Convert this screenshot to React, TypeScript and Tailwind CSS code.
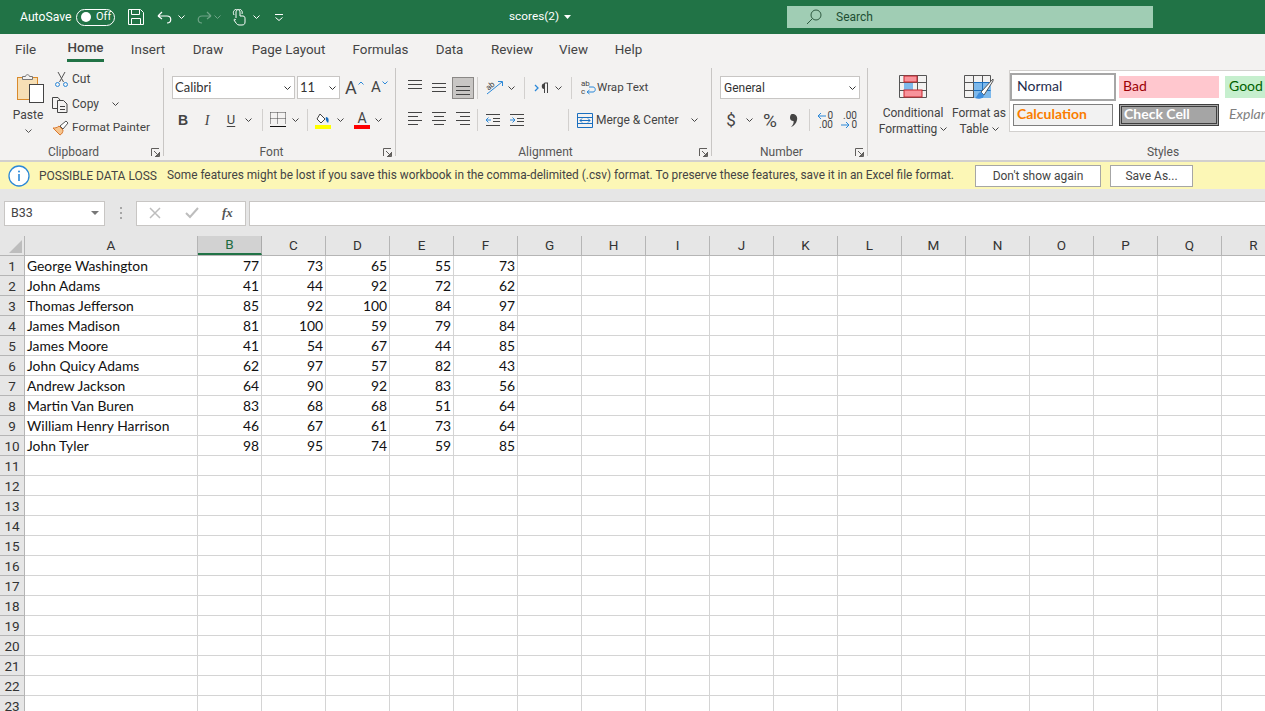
import type { ReactNode } from "react";

const tabs = [
  { label: "File", cls: "w-[51px]" },
  { label: "Home", cls: "w-[69px]" },
  { label: "Insert", cls: "w-[56px]" },
  { label: "Draw", cls: "w-[64px]" },
  { label: "Page Layout", cls: "w-[97px]" },
  { label: "Formulas", cls: "w-[87px]" },
  { label: "Data", cls: "w-[51px]" },
  { label: "Review", cls: "w-[74px]" },
  { label: "View", cls: "w-[49px]" },
  { label: "Help", cls: "w-[61px]" },
];

const columns = ["B", "C", "D", "E", "F", "G", "H", "I", "J", "K", "L", "M", "N", "O", "P", "Q", "R"];

const people: [string, number, number, number, number, number][] = [
  ["George Washington", 77, 73, 65, 55, 73],
  ["John Adams", 41, 44, 92, 72, 62],
  ["Thomas Jefferson", 85, 92, 100, 84, 97],
  ["James Madison", 81, 100, 59, 79, 84],
  ["James Moore", 41, 54, 67, 44, 85],
  ["John Quicy Adams", 62, 97, 57, 82, 43],
  ["Andrew Jackson", 64, 90, 92, 83, 56],
  ["Martin Van Buren", 83, 68, 68, 51, 64],
  ["William Henry Harrison", 46, 67, 61, 73, 64],
  ["John Tyler", 98, 95, 74, 59, 85],
];

function Chevron({ className = "text-[#605e5c]" }: { className?: string }) {
  return (
    <svg width="7" height="4" viewBox="0 0 7 4" fill="none" stroke="currentColor" className={`shrink-0 ${className}`}>
      <path d="M.5.5l3 3 3-3" />
    </svg>
  );
}

function Launcher() {
  return (
    <div className="w-4 flex justify-end pr-[3px]">
      <svg width="9" height="9" viewBox="0 0 9 9" fill="none" stroke="#605e5c">
        <path d="M.5 8V.5H8M8.5 4v4.5H4M3 3l4.5 4.5M5 7.5h2.5V5" />
      </svg>
    </div>
  );
}

function Group({ label, className, children }: { label: string; className: string; children: ReactNode }) {
  return (
    <div className={`flex flex-col h-[95px] shrink-0 ${className}`}>
      <div className="flex-1 min-h-0">{children}</div>
      <div className="h-[16px] flex items-center text-[12px] text-[#555]">
        <div className="flex-1 text-center">{label}</div>
        <Launcher />
      </div>
    </div>
  );
}

function RibbonDivider() {
  return <div className="w-px h-[88px] mt-[3px] bg-[#c8c6c4] shrink-0" />;
}

function Lines({ ys, xs }: { ys: number[]; xs?: [number, number][] }) {
  return (
    <svg width="16" height="16" viewBox="0 0 16 16" stroke="#444" fill="none">
      {ys.map((y, i) => (
        <path key={i} d={`M${xs ? xs[i][0] : 1} ${y}.5H${xs ? xs[i][1] : 15}`} />
      ))}
    </svg>
  );
}

function VSep({ className }: { className: string }) {
  return <div className={`w-px h-[22px] bg-[#d2d0ce] shrink-0 ${className}`} />;
}

function Combo({ className, text }: { className: string; text: string }) {
  return (
    <div className={`h-[23px] bg-white border border-[#c8c6c4] flex items-center justify-between pr-[3px] text-[#333] ${className}`}>
      <span>{text}</span>
      <Chevron className="text-[#333]" />
    </div>
  );
}

function ClipboardGroup() {
  return (
    <Group label="Clipboard" className="w-[163px]">
      <div className="flex text-[12px] text-[#444] h-full">
        <div className="w-[52px] pl-[4px] pt-[7px] flex flex-col items-center">
          <svg width="28" height="32" viewBox="0 0 28 32" className="ml-[4px]">
            <rect x="1.5" y="5.5" width="20" height="22" fill="#f6dfb5" stroke="#d98a2c" />
            <path d="M6.5 7.5V4.5H9.5C10 2 13 2 13.5 4.5H16.5V7.5Z" fill="#f3f2f1" stroke="#777" />
            <rect x="13.5" y="12.5" width="14" height="18" fill="#fff" stroke="#444" />
          </svg>
          <div className="mt-[2px] leading-[18px]">Paste</div>
          <Chevron className="mt-[5px] text-[#555]" />
        </div>
        <div className="flex flex-col">
          <div className="h-[22px] mt-[3px] flex items-center">
            <svg width="15" height="17" viewBox="0 0 15 17" fill="none" className="ml-[2px] mr-[3px]">
              <path d="M4 1l5.5 10M11 1L5.500 11" stroke="#555" />
              <circle cx="3.5" cy="13.5" r="2" stroke="#2b88d8" />
              <circle cx="11.5" cy="13.5" r="2" stroke="#2b88d8" />
            </svg>
            <span>Cut</span>
          </div>
          <div className="h-[24px] mt-[2px] flex items-center">
            <svg width="17" height="17" viewBox="0 0 17 17" fill="none" stroke="#444" className="mr-[3px]">
              <path d="M6 12.5H.5V1.5H6L8 4M5.5 4.5h6l3.5 3.5v8.5H5.5z" />
              <path d="M8 10.5h5M8 13.5h5" />
            </svg>
            <span>Copy</span>
            <Chevron className="ml-[13px] text-[#444]" />
          </div>
          <div className="h-[22px] mt-[1px] flex items-center">
            <svg width="17" height="16" viewBox="0 0 17 16" fill="none" className="mr-[3px]">
              <path d="M2 9l6 6c2-1 3-3 3-5L7 6C5 8 3 8 1 8z" fill="#f6c58f" stroke="#d9772c" />
              <path d="M8 6l6-5 2 2-5 6z" fill="#fff" stroke="#555" />
            </svg>
            <span className="text-[11.8px]">Format Painter</span>
          </div>
        </div>
      </div>
    </Group>
  );
}

function FontGroup() {
  return (
    <Group label="Font" className="w-[231px]">
      <div className="pl-[8px] pt-[11px] text-[#444]">
        <div className="flex items-center h-[23px]">
          <Combo className="w-[123px] pl-[2px] text-[13px] [font-family:'Lato',sans-serif]" text="Calibri" />
          <Combo className="w-[43px] ml-[2px] pl-[2px] text-[13px] [font-family:'Lato',sans-serif]" text="11" />
          <div className="w-[17px] ml-[5px] text-[18px] leading-none relative">
            A
            <svg width="6" height="4" viewBox="0 0 6 4" fill="none" stroke="#2b88d8" className="absolute right-[-2px] top-[2px]">
              <path d="M.5 3.5L3 1l2.5 2.5" />
            </svg>
          </div>
          <div className="w-[14px] ml-[9px] text-[15px] leading-none relative">
            A
            <svg width="6" height="4" viewBox="0 0 6 4" fill="none" stroke="#2b88d8" className="absolute right-[-3px] top-[1px]">
              <path d="M.5.5L3 3l2.5-2.5" />
            </svg>
          </div>
        </div>
        <div className="flex items-center h-[24px] mt-[9px]">
          <div className="w-[24px] ml-[-1px] text-center text-[14px] font-bold text-[#444] [font-family:'Liberation_Sans',sans-serif]">B</div>
          <div className="w-[24px] text-center text-[14px] italic text-[#444] [font-family:'Liberation_Serif',serif]">I</div>
          <div className="w-[24px] text-center text-[13px] underline underline-offset-2 text-[#444]">U</div>
          <Chevron className="ml-[2px] text-[#444]" />
          <VSep className="ml-[10px]" />
          <svg width="16" height="16" viewBox="0 0 16 16" fill="none" className="ml-[7px]">
            <path d="M.5.5h15M.5 6.5h15M.5 .5v12M7.5.5v12M15.5.5v12" stroke="#444" strokeDasharray="1 1" />
            <path d="M0 14.5h16" stroke="#111" />
          </svg>
          <Chevron className="ml-[6px] text-[#444]" />
          <VSep className="ml-[8px]" />
          <svg width="16" height="17" viewBox="0 0 16 17" fill="none" className="ml-[7px]">
            <path d="M5 2l5 5-4 4-4-4z" fill="#fff" stroke="#444" />
            <path d="M11 5c3 0 3 4 2 6-1-1-3-3-2-6z" fill="#1a6fbf" />
            <rect y="13" width="16" height="4" fill="#ffff00" />
          </svg>
          <Chevron className="ml-[6px] text-[#444]" />
          <div className="w-[16px] ml-[10px] flex flex-col items-center text-[14px] leading-[14px] text-[#444]">
            A<div className="w-[16px] h-[4px] bg-[#ff0000]" />
          </div>
          <Chevron className="ml-[5px] text-[#444]" />
        </div>
      </div>
    </Group>
  );
}

function AlignmentGroup() {
  return (
    <Group label="Alignment" className="w-[315px]">
      <div className="pl-[11px] pt-[11px] text-[12px] text-[#444]">
        <div className="flex items-center h-[23px]">
          <div className="w-[24px]"><Lines ys={[0, 4, 8]} /></div>
          <div className="w-[24px]"><Lines ys={[3, 7, 11]} /></div>
          <div className="w-[22px] h-[22px] -ml-[3px] bg-[#c8c6c4] border border-[#8a8886] flex items-center justify-center"><Lines ys={[6, 10, 14]} /></div>
          <VSep className="ml-[3px]" />
          <svg width="20" height="17" viewBox="0 0 20 17" fill="none" className="ml-[7px]">
            <path d="M2 15L17 3M13 2.5h4.5V7" stroke="#2b88d8" />
            <text x="1" y="9" fontSize="8" fill="#444" transform="rotate(-40 6 7)" fontFamily="Roboto">ab</text>
          </svg>
          <Chevron className="ml-[3px] text-[#444]" />
          <VSep className="ml-[9px]" />
          <svg width="16" height="14" viewBox="0 0 16 14" fill="none" className="ml-[9px]">
            <path d="M1 4l3 3-3 3" stroke="#2b88d8" strokeWidth="1.3" />
            <path d="M10.5 2H14M10.5 2v10M13.5 2v10" stroke="#444" />
            <path d="M10 2.5C7 2.5 7 8 10 8z" fill="#444" />
          </svg>
          <Chevron className="ml-[5px] text-[#444]" />
          <VSep className="ml-[9px]" />
          <div className="ml-[9px] flex items-center whitespace-nowrap">
            <svg width="16" height="17" viewBox="0 0 16 17" fill="none">
              <text x="0" y="7" fontSize="8" fill="#444" fontFamily="Roboto">ab</text>
              <text x="0" y="15" fontSize="8" fill="#444" fontFamily="Roboto">c</text>
              <path d="M6 13h6c3 0 3-5 0-5H8M8.5 11L6 13l2.5 2" stroke="#2b88d8" />
            </svg>
            <span className="text-[11.6px]">Wrap Text</span>
          </div>
        </div>
        <div className="flex items-center h-[24px] mt-[9px]">
          <div className="w-[24px]"><Lines ys={[0, 4, 8, 12]} xs={[[1, 15], [1, 11], [1, 15], [1, 11]]} /></div>
          <div className="w-[24px]"><Lines ys={[0, 4, 8, 12]} xs={[[1, 15], [3, 13], [1, 15], [3, 13]]} /></div>
          <div className="w-[24px]"><Lines ys={[0, 4, 8, 12]} xs={[[1, 15], [5, 15], [1, 15], [5, 15]]} /></div>
          <VSep className="ml-[-2px]" />
          <svg width="16" height="16" viewBox="0 0 16 16" fill="none" className="ml-[7px]">
            <path d="M1 2.5h14M8 6.5h7M8 9.5h7M1 13.5h14" stroke="#444" />
            <path d="M6 8H1M3.5 5.5L1 8l2.5 2.5" stroke="#2b88d8" />
          </svg>
          <svg width="16" height="16" viewBox="0 0 16 16" fill="none" className="ml-[8px]">
            <path d="M1 2.5h14M8 6.5h7M8 9.5h7M1 13.5h14" stroke="#444" />
            <path d="M1 8h5M3.5 5.5L6 8l-2.5 2.5" stroke="#2b88d8" />
          </svg>
          <VSep className="ml-[43px]" />
          <div className="ml-[8px] flex items-center whitespace-nowrap">
            <svg width="16" height="15" viewBox="0 0 16 15" fill="none" className="mr-[3px]">
              <path d="M.5.5h15v14H.5zM.5 4.5h15M.5 10.5h15" stroke="#1a6fbf" />
              <path d="M3 7.5h10M5 5.5l-2 2 2 2M11 5.5l2 2-2 2" stroke="#1a6fbf" />
            </svg>
            <span>Merge &amp; Center</span>
            <Chevron className="ml-[13px] text-[#444]" />
          </div>
        </div>
      </div>
    </Group>
  );
}

function NumberGroup() {
  return (
    <Group label="Number" className="w-[155px]">
      <div className="pl-[8px] pt-[11px] text-[#444]">
        <Combo className="w-[140px] pl-[3px] text-[12px]" text="General" />
        <div className="flex items-center h-[24px] mt-[9px]">
          <div className="w-[22px] text-center text-[17px] leading-none">$</div>
          <Chevron className="ml-[4px] text-[#444]" />
          <div className="w-[20px] ml-[7px] text-center text-[19px] leading-none">%</div>
          <svg width="8" height="13" viewBox="0 0 8 13" className="ml-[10px]">
            <path d="M2 0c3-.5 6 2 5 6-.5 3-3 6-6 7 2-2 3-4 2.5-6C1 7 0 5.5 0 3.5 0 1.5 1 .2 2 0z" fill="#444" />
          </svg>
          <VSep className="ml-[11px]" />
          <div className="ml-[7px] w-[16px] text-[10px] leading-[9px] shrink-0">
            <div className="flex justify-between items-center">
              <svg width="9" height="8" viewBox="0 0 9 8" fill="none" stroke="#2b88d8"><path d="M9 4H1M4 1L1 4l3 3" /></svg>
              <span>0</span>
            </div>
            <div className="text-right">.00</div>
          </div>
          <div className="ml-[8px] w-[16px] text-[10px] leading-[9px] shrink-0">
            <div className="text-right">.00</div>
            <div className="flex justify-between items-center">
              <svg width="9" height="8" viewBox="0 0 9 8" fill="none" stroke="#2b88d8"><path d="M0 4h8M5 1l3 3-3 3" /></svg>
              <span>0</span>
            </div>
          </div>
        </div>
      </div>
    </Group>
  );
}

function StyleCell({ className, text }: { className: string; text: string }) {
  return <div className={`flex items-center text-[14px] pb-[3px] shrink-0 whitespace-nowrap overflow-hidden [font-family:'Lato',sans-serif] ${className}`}>{text}</div>;
}

function StylesGroup() {
  return (
    <div className="flex-1 flex flex-col h-[95px] min-w-0">
      <div className="flex-1 flex min-h-0 text-[12px] text-[#444]">
        <div className="w-[66px] ml-[12px] pt-[10px] flex flex-col items-center leading-[16px] shrink-0">
          <svg width="28" height="23" viewBox="0 0 28 23" fill="none" className="mb-[7px]">
            <path d="M.5.5h27v22H.5zM.5 7.5h27M.5 15.5h27M9.5.5v22M18.5.5v22" stroke="#555" />
            <rect x="5" y="1" width="13" height="6" fill="#f8939b" stroke="#c7262f" />
            <rect x="5" y="8" width="9" height="7" fill="#7db9ec" />
            <rect x="5" y="15" width="18" height="7" fill="#f8939b" stroke="#c7262f" />
          </svg>
          <div className="whitespace-nowrap">Conditional</div>
          <div className="whitespace-nowrap flex items-center gap-[3px]">Formatting <Chevron className="text-[#444]" /></div>
        </div>
        <div className="w-[60px] ml-[3px] pt-[10px] flex flex-col items-center leading-[16px] shrink-0">
          <svg width="30" height="27" viewBox="0 0 30 27" fill="none" className="mb-[3px]">
            <path d="M.5.5h26v22H.5zM.5 7.5h26M.5 15.5h26M9.5.5v22M18.5.5v22" stroke="#555" />
            <rect x="10" y="8" width="17" height="15" fill="#7db9ec" />
            <path d="M9.5 7.5h17M18.5 7.5v15M9.5 15.5h17" stroke="#1a6fbf" />
            <path d="M29 4L17 17l3 3L29 6z" fill="#fff" stroke="#555" />
            <path d="M17 17c-3 0-3 4-6 6 4 2 9 0 9-3z" fill="#3e8ede" />
          </svg>
          <div className="whitespace-nowrap">Format as</div>
          <div className="whitespace-nowrap flex items-center gap-[3px]">Table <Chevron className="text-[#444]" /></div>
        </div>
        <div className="w-[256px] h-[62px] mt-[5px] bg-white border-y border-l border-[#d2d0ce] overflow-hidden pt-[2px] shrink-0">
          <div className="flex items-center h-[28px]">
            <StyleCell className="w-[106px] h-[28px] border-2 border-[#a6a6a6] bg-white text-[#1f2d4d] pl-[5px]" text="Normal" />
            <StyleCell className="w-[100px] h-[22px] ml-[3px] bg-[#ffc7ce] text-[#9c0006] pl-[4px]" text="Bad" />
            <StyleCell className="w-[100px] h-[22px] ml-[6px] bg-[#c6efce] text-[#006100] pl-[4px]" text="Good" />
          </div>
          <div className="flex items-center h-[22px] mt-[3px]">
            <StyleCell className="w-[100px] h-[22px] ml-[3px] bg-[#f2f2f2] border border-[#7f7f7f] text-[#fa7d00] font-bold pl-[3px]" text="Calculation" />
            <StyleCell className="w-[100px] h-[22px] ml-[6px] bg-[#a5a5a5] border-[3px] border-double border-[#3f3f3f] text-white font-bold pl-[2px] pb-[1px]" text="Check Cell" />
            <StyleCell className="w-[100px] h-[22px] ml-[6px] italic text-[#7f7f7f] pl-[4px]" text="Explanatory..." />
          </div>
        </div>
      </div>
      <div className="h-[16px] flex items-center justify-center text-[12px] text-[#555] pl-[193px]">Styles</div>
    </div>
  );
}

function TitleBar() {
  return (
    <div className="h-[34px] bg-[#217346] flex items-center text-white shrink-0">
      <div className="ml-[20px] w-[52px] text-[12.2px] whitespace-nowrap">AutoSave</div>
      <div className="ml-[4px] w-[39px] h-[17px] rounded-full border border-white flex items-center pl-[4px] text-[11px] gap-[5px]">
        <div className="w-[10px] h-[10px] bg-white rounded-full" />
        <span>Off</span>
      </div>
      <svg width="16" height="16" viewBox="0 0 16 16" fill="none" stroke="#fff" className="ml-[13px]">
        <path d="M.5.5h12l3 3v12H.5zM3.5.5v5h8v-5M3.5 15.5v-6h9v6" />
      </svg>
      <svg width="16" height="14" viewBox="0 0 16 14" fill="none" stroke="#fff" strokeWidth="1.2" className="ml-[13px]">
        <path d="M1 6h9c5 0 5 7 0 7M1 6l4-4M1 6l4 3" />
      </svg>
      <Chevron className="ml-[5px] text-white" />
      <svg width="16" height="14" viewBox="0 0 16 14" fill="none" stroke="#6fa487" strokeWidth="1.2" className="ml-[11px]">
        <path d="M15 6H6c-5 0-5 7 0 7M15 6l-4-4M15 6l-4 3" />
      </svg>
      <Chevron className="ml-[2px] text-[#6fa487]" />
      <svg width="14" height="17" viewBox="0 0 14 17" fill="none" stroke="#fff" className="ml-[11px]">
        <path d="M4 9V3c0-3 4-3 4 0v4h3c2 0 2 2 2 3v3c0 2-1 3-3 3H7c-2 0-3-2-5-5 0-1 1-1 2 0" />
        <path d="M2 6c-2-4 1-6 4-6s5 2 4 5" />
      </svg>
      <Chevron className="ml-[7px] text-white" />
      <svg width="8" height="7" viewBox="0 0 8 7" fill="none" stroke="#fff" className="ml-[15px]">
        <path d="M0 .5h8M.5 3.5L4 6.5l3.5-3" />
      </svg>
      <div className="ml-[226px] text-[11.8px] w-[52px] whitespace-nowrap">scores(2)</div>
      <svg width="7" height="4" viewBox="0 0 7 4" className="ml-[3px]"><path d="M0 0h7L3.5 4z" fill="#fff" /></svg>
      <div className="ml-[216px] w-[366px] h-[22px] bg-[#a0cdb4] flex items-center text-[#1e4f33] text-[12px]">
        <svg width="16" height="16" viewBox="0 0 16 16" fill="none" stroke="#2f5a41" className="ml-[19px] mr-[14px]">
          <circle cx="10" cy="6" r="5" />
          <path d="M6.5 9.5L1 15" />
        </svg>
        Search
      </div>
    </div>
  );
}

function FormulaBar() {
  return (
    <div className="h-[47px] bg-[#e6e6e6] flex items-center shrink-0 pt-[1px]">
      <div className="ml-[4px] w-[101px] h-[25px] bg-white border border-[#c8c6c4] flex items-center justify-between pl-[6px] pr-[5px] text-[12.5px] text-[#444]">
        B33
        <svg width="8" height="4" viewBox="0 0 8 4"><path d="M0 0h8L4 4z" fill="#777" /></svg>
      </div>
      <div className="ml-[15px] w-[2px] flex flex-col gap-[3px]">
        <div className="h-[2px] bg-[#a6a6a6]" />
        <div className="h-[2px] bg-[#a6a6a6]" />
        <div className="h-[2px] bg-[#a6a6a6]" />
      </div>
      <div className="ml-[14px] w-[110px] h-[25px] bg-white border border-[#c8c6c4] flex items-center">
        <svg width="12" height="12" viewBox="0 0 12 12" fill="none" stroke="#bdbdbd" strokeWidth="1.5" className="ml-[12px]">
          <path d="M1 1l10 10M11 1L1 11" />
        </svg>
        <svg width="14" height="12" viewBox="0 0 14 12" fill="none" stroke="#bdbdbd" strokeWidth="2" className="ml-[24px]">
          <path d="M1 6l4 4 8-9" />
        </svg>
        <div className="ml-[23px] text-[13px] italic font-semibold text-[#555] [font-family:'Liberation_Serif',serif]">fx</div>
      </div>
      <div className="ml-[3px] flex-1 h-[25px] bg-white border-y border-l border-[#c8c6c4]" />
    </div>
  );
}

function HeaderCell({ label }: { label: string }) {
  const active = label === "B";
  return (
    <div
      className={`w-[64px] shrink-0 border-r flex items-center justify-center ${
        active ? "bg-[#d2d2d2] border-[#ababab] border-b-2 border-b-[#217346] text-[#1e6b41]" : "border-[#b5b5b5]"
      }`}
    >
      {label}
    </div>
  );
}

function Row({ n, person }: { n: number; person?: (typeof people)[number] }) {
  const scores = person ? person.slice(1) : [];
  return (
    <div className="h-[20px] flex shrink-0">
      <div className="w-[25px] shrink-0 bg-[#e6e6e6] border-r border-b border-[#b5b5b5] flex items-center justify-center pt-[1px] text-[13.5px] text-[#333] [font-family:'Roboto',sans-serif]">
        {n}
      </div>
      <div className="w-[173px] shrink-0 border-r border-b border-[#d4d4d4] pl-[2px] pt-[1px] flex items-center whitespace-nowrap">
        {person ? person[0] : ""}
      </div>
      {columns.map((c, i) => (
        <div key={c} className="w-[64px] shrink-0 border-r border-b border-[#d4d4d4] pr-[2px] pt-[1px] flex items-center justify-end">
          {scores[i] ?? ""}
        </div>
      ))}
    </div>
  );
}

export default function App() {
  const rows = Array.from({ length: 23 }, (_, i) => i + 1);
  return (
    <div className="w-[1265px] h-[711px] overflow-hidden flex flex-col bg-white [font-family:'Roboto',sans-serif]">
      <TitleBar />

      <div className="h-[31px] bg-[#f3f2f1] flex text-[13.4px] text-[#444] shrink-0">
        {tabs.map((t) => (
          <div key={t.label} className={`${t.cls} h-full flex justify-center items-start`}>
            {t.label === "Home" ? (
              <div className="h-[28px] flex items-center border-b-[3px] border-[#217346] font-medium pt-[4px] px-[1px]">{t.label}</div>
            ) : (
              <div className="h-[31px] flex items-center pt-[1px]">{t.label}</div>
            )}
          </div>
        ))}
      </div>

      <div className="h-[97px] bg-[#f3f2f1] border-b-2 border-[#d2d0ce] flex shrink-0">
        <ClipboardGroup />
        <RibbonDivider />
        <FontGroup />
        <RibbonDivider />
        <AlignmentGroup />
        <RibbonDivider />
        <NumberGroup />
        <RibbonDivider />
        <StylesGroup />
      </div>

      <div className="h-[27px] bg-[#fcf7b6] flex items-center shrink-0 text-[#444] text-[12px]">
        <svg width="22" height="22" viewBox="0 0 22 22" fill="none" className="ml-[8px]">
          <circle cx="11" cy="11" r="10" stroke="#2b88d8" strokeWidth="1.3" fill="#fff" />
          <path d="M11 9v7" stroke="#2b88d8" strokeWidth="1.6" />
          <circle cx="11" cy="6.5" r="1" fill="#2b88d8" />
        </svg>
        <span className="ml-[9px] whitespace-nowrap">POSSIBLE DATA LOSS</span>
        <span className="ml-[10px] text-[11.85px] whitespace-nowrap">
          Some features might be lost if you save this workbook in the comma-delimited (.csv) format. To preserve these features, save it in an Excel file format.
        </span>
        <div className="ml-auto w-[126px] h-[22px] bg-white border border-[#a6a6a6] flex items-center justify-center">Don't show again</div>
        <div className="ml-[9px] mr-[72px] w-[83px] h-[22px] bg-white border border-[#a6a6a6] flex items-center justify-center">Save As...</div>
      </div>

      <FormulaBar />

      <div className="flex-1 min-h-0 overflow-hidden flex flex-col text-[13.86px] text-[#111] [font-family:'Lato',sans-serif]">
        <div className="h-[20px] bg-[#e6e6e6] flex shrink-0 text-[13.5px] text-[#333] [font-family:'Roboto',sans-serif] border-b border-[#b5b5b5]">
          <div className="w-[25px] shrink-0 border-r border-[#b5b5b5] flex items-end justify-end p-[2px]">
            <svg width="13" height="13" viewBox="0 0 13 13"><path d="M13 0v13H0z" fill="#bdbdbd" /></svg>
          </div>
          <div className="w-[173px] shrink-0 border-r border-[#b5b5b5] flex items-center justify-center">A</div>
          {columns.map((c) => (
            <HeaderCell key={c} label={c} />
          ))}
        </div>
        {rows.map((n) => (
          <Row key={n} n={n} person={people[n - 1]} />
        ))}
      </div>
    </div>
  );
}
